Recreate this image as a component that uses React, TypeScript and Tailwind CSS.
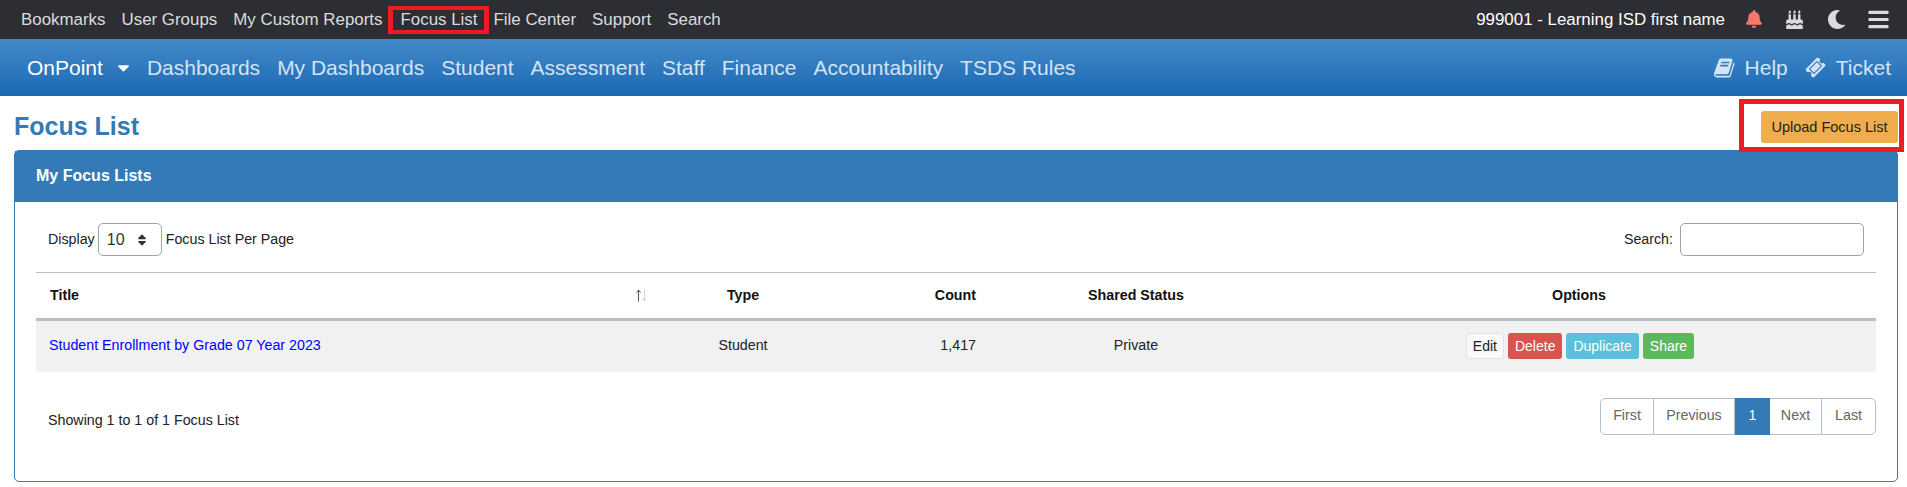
import { FaBars, FaBell, FaBirthdayCake, FaCaretDown, FaMoon, FaSort } from "react-icons/fa";

const TOP_LINKS = ["Bookmarks", "User Groups", "My Custom Reports", "Focus List", "File Center", "Support", "Search"];
const MAIN_LINKS = ["Dashboards", "My Dashboards", "Student", "Assessment", "Staff", "Finance", "Accountability", "TSDS Rules"];
const PAGES = [
  { label: "First", width: "w-[53px]" },
  { label: "Previous", width: "w-[81px]" },
  { label: "1", width: "w-[35px]" },
  { label: "Next", width: "w-[52px]" },
  { label: "Last", width: "w-[53px]" },
];

// Font Awesome 4 glyphs, the newer packs only carry the redrawn versions
function BookIcon() {
  return (
    <svg viewBox="0 0 1792 1792" fill="currentColor" className="mr-[9px] h-[22px] w-[22px]">
      <path d="M1639 478q40 57 18 129l-275 906q-19 64-76.5 107.5t-122.5 43.5h-923q-77 0-148.5-53.5t-99.5-131.5q-24-67-2-127 0-4 3-27t4-37q1-8-3-21.5t-3-19.5q2-11 8-21t16.5-23.5 16.5-23.5q23-38 45-91.5t30-91.5q3-10 .5-30t-.5-28q3-11 17-28t17-23q21-36 42-92t25-90q1-9-2.5-32t.5-28q4-13 22-30.5t22-22.5q19-26 42.5-84.5t27.5-96.5q1-8-3-25.5t-2-26.5q2-8 9-18t18-23 17-21q8-12 16.5-30.5t15-35 16-36 19.5-32 26.5-23.5 36-11.5 47.5 5.5l-1 3q38-9 51-9h761q74 0 114 56t18 130l-274 906q-36 119-71.5 153.5t-128.5 34.5h-869q-27 0-38 15-11 16-1 43 24 70 144 70h923q29 0 56-15.5t35-41.5l300-987q7-22 5-57 38 15 59 43zm-1064 2q-4 13 2 22.5t20 9.5h608q13 0 25.5-9.5t16.5-22.5l21-64q4-13-2-22.5t-20-9.5h-608q-13 0-25.5 9.5t-16.5 22.5zm-83 256q-4 13 2 22.5t20 9.5h608q13 0 25.5-9.5t16.5-22.5l21-64q4-13-2-22.5t-20-9.5h-608q-13 0-25.5 9.5t-16.5 22.5z" />
    </svg>
  );
}

function TicketIcon() {
  return (
    <svg viewBox="0 0 1792 1792" fill="currentColor" className="mr-[10px] h-[21px] w-[21px]">
      <path d="M1024 452l316 316-572 572-316-316zm-211 979l618-618q19-19 19-45t-19-45l-362-362q-18-18-45-18t-45 18l-618 618q-19 19-19 45t19 45l362 362q18 18 45 18t45-18zm889-637l-907 908q-37 37-90.5 37t-90.5-37l-126-126q56-56 56-136t-56-136-136-56-136 56l-125-126q-37-37-37-90.5t37-90.5l907-906q37-37 90.5-37t90.5 37l125 125q-56 56-56 136t56 136 136 56 136-56l126 125q37 37 37 90.5t-37 90.5z" />
    </svg>
  );
}

function SortArrows() {
  return (
    <svg viewBox="0 0 13 13" fill="none" className="h-[13px] w-[13px]">
      <path d="M3.5 12.5V1M1.5 3.5L3.5 1l2 2.5" stroke="#6e4a52" />
      <path d="M9.5 0.5V12M7.5 9.5L9.5 12l2-2.5" stroke="#d4d4da" />
    </svg>
  );
}

function TopBar() {
  return (
    <div className="flex h-[39px] items-center justify-between bg-[#2d2e33] pl-[21px] pr-[17px] text-[16.9px] text-[#dcdcdc]">
      <div className="flex items-center gap-[16px]">
        {TOP_LINKS.map((label) =>
          label === "Focus List" ? (
            <span key={label} className="-ml-[10px] -mr-[12px] border-[4px] border-x-[5px] border-[#ed1c24] px-[7px] leading-[20px]">
              {label}
            </span>
          ) : (
            <span key={label}>{label}</span>
          ),
        )}
      </div>
      <div className="flex items-center">
        <span className="mr-[20px] text-white">999001 - Learning ISD first name</span>
        <FaBell className="mr-[22px] text-[18px] text-[#f7786b]" />
        <FaBirthdayCake className="mr-[23px] text-[19px] text-[#dcdcdc]" />
        <FaMoon className="mr-[21px] text-[19px] text-[#dcdcdc]" />
        <FaBars className="text-[23px] text-[#dcdcdc]" />
      </div>
    </div>
  );
}

function MainNav() {
  return (
    <div className="flex h-[57px] items-center justify-between bg-gradient-to-b from-[#428bca] to-[#1a68b2] pl-[27px] pr-[16px] text-[21px] text-[#d4e4f5]">
      <div className="flex items-center gap-[17px]">
        <span className="flex items-center text-white">
          OnPoint
          <FaCaretDown className="-mr-[3px] ml-[11px] text-[19px]" />
        </span>
        {MAIN_LINKS.map((label) => (
          <span key={label}>{label}</span>
        ))}
      </div>
      <div className="flex items-center">
        <BookIcon />
        <span className="mr-[17px]">Help</span>
        <TicketIcon />
        <span>Ticket</span>
      </div>
    </div>
  );
}

function FocusListTable() {
  return (
    <table className="w-full table-fixed border-t border-[#b6bec8] text-[14.25px] text-[#222]">
      <thead>
        <tr className="h-[47px] border-b-[3px] border-[#b6bec8] font-bold text-[#111]">
          <th className="w-[624px] pl-[14px] text-left">
            <div className="flex items-center justify-between pr-[12px]">
              Title
              <SortArrows />
            </div>
          </th>
          <th className="w-[166px] text-center">Type</th>
          <th className="w-[164px] pr-[14px] text-right">Count</th>
          <th className="w-[292px] text-center">Shared Status</th>
          <th className="text-center">Options</th>
        </tr>
      </thead>
      <tbody>
        <tr className="h-[52px] bg-[#f1f1f1]">
          <td className="pb-[2px] pl-[13px] text-[#0000ff]">Student Enrollment by Grade 07 Year 2023</td>
          <td className="pb-[2px] text-center">Student</td>
          <td className="pb-[2px] pr-[14px] text-right">1,417</td>
          <td className="pb-[2px] text-center">Private</td>
          <td>
            <div className="flex items-center justify-center gap-[4px] pl-[2px] text-[14px]">
              <span className="rounded-[3px] border border-[#dfe5ec] bg-[#f7f9fb] px-[6px] leading-[24px] text-[#222]">Edit</span>
              <span className="rounded-[3px] bg-[#d9534f] px-[7px] leading-[26px] text-white">Delete</span>
              <span className="rounded-[3px] bg-[#5bc0de] px-[7px] leading-[26px] text-white">Duplicate</span>
              <span className="rounded-[3px] bg-[#5cb85c] px-[7px] leading-[26px] text-white">Share</span>
            </div>
          </td>
        </tr>
      </tbody>
    </table>
  );
}

function Pagination() {
  return (
    <div className="flex h-[37px] rounded-[5px] border border-[#b6bec8] text-[14.25px] text-[#666]">
      {PAGES.map((page) =>
        page.label === "1" ? (
          <span key={page.label} className={`-my-px flex items-center justify-center bg-[#337ab7] text-white ${page.width}`}>
            {page.label}
          </span>
        ) : (
          <span key={page.label} className={`flex items-center justify-center border-r border-[#b6bec8] last:border-r-0 ${page.width}`}>
            {page.label}
          </span>
        ),
      )}
    </div>
  );
}

export default function App() {
  return (
    <div className="h-[487px] w-[1907px] overflow-hidden bg-white font-['Liberation_Sans',Arial,sans-serif]">
      <TopBar />
      <MainNav />
      <div className="pl-[14px] pr-[9px]">
        <div className="flex h-[54px] items-start justify-between">
          <h1 className="mt-[14px] text-[25px] font-bold leading-[32px] text-[#337ab7]">Focus List</h1>
          <div className="relative z-10 -mr-[6px] mt-[3px] border-[5px] border-[#ed1c24] pb-[4px] pl-[17px] pr-[1px] pt-[7px]">
            <span className="block rounded-[3px] bg-[#f0ad4e] px-[10.5px] text-[14.5px] leading-[32px] text-[#222]">Upload Focus List</span>
          </div>
        </div>
        <div className="h-[332px] rounded-[5px] border border-[#337ab7]">
          <div className="flex h-[51px] items-center bg-[#337ab7] pb-[2px] pl-[21px] text-[16px] font-bold text-white">My Focus Lists</div>
          <div className="px-[21px]">
            <div className="flex h-[70px] items-center justify-between px-[12px] pt-[5px] text-[14.25px] text-[#222]">
              <div className="flex items-center">
                Display
                <div className="ml-[3px] mr-[4px] flex h-[33px] w-[64px] items-center justify-between rounded-[5px] border border-[#9aa5b1] pl-[8px] pr-[12px] text-[16px] text-[#333]">
                  10
                  <FaSort className="text-[14px]" />
                </div>
                Focus List Per Page
              </div>
              <div className="flex items-center">
                Search:
                <div className="ml-[7px] h-[33px] w-[184px] rounded-[5px] border border-[#9aa5b1]" />
              </div>
            </div>
            <FocusListTable />
            <div className="mt-[26px] flex items-center justify-between pl-[12px]">
              <span className="pt-[10px] text-[14.25px] text-[#222]">Showing 1 to 1 of 1 Focus List</span>
              <Pagination />
            </div>
          </div>
        </div>
      </div>
    </div>
  );
}
